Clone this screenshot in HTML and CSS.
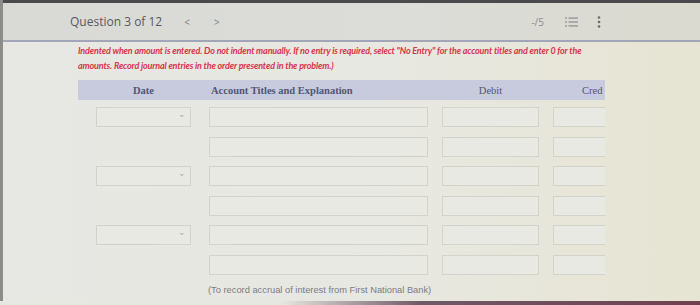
FILE: index.html
```html
<!DOCTYPE html>
<html lang="en">
<head>
  <meta charset="UTF-8">
  <title>Question 3 of 12</title>
  <link rel="stylesheet" href="styles.css">
</head>
<body>
  <div class="topbar"></div>
  <div class="header">
    <div class="nav">
      <span class="title">Question 3 of 12</span>
      <span class="arrow">&lt;</span>
      <span class="arrow">&gt;</span>
    </div>
    <div class="tools">
      <span class="score">-/5</span>
      <svg class="list-icon" width="13" height="10" viewBox="0 0 13 10">
        <g fill="#8a8d94">
          <rect x="0" y="0.5" width="2" height="1.2"/>
          <rect x="0" y="4.4" width="2" height="1.2"/>
          <rect x="0" y="8.3" width="2" height="1.2"/>
          <rect x="3.5" y="0.5" width="9.5" height="1.2"/>
          <rect x="3.5" y="4.4" width="9.5" height="1.2"/>
          <rect x="3.5" y="8.3" width="9.5" height="1.2"/>
        </g>
      </svg>
      <svg class="kebab" width="4" height="12" viewBox="0 0 4 12">
        <g fill="#666a72">
          <circle cx="2" cy="1.5" r="1.3"/>
          <circle cx="2" cy="6" r="1.3"/>
          <circle cx="2" cy="10.5" r="1.3"/>
        </g>
      </svg>
    </div>
  </div>

  <div class="content">
    <p class="note">Indented when amount is entered. Do not indent manually. If no entry is required, select "No Entry" for the account titles and enter 0 for the amounts. Record journal entries in the order presented in the problem.)</p>

    <div class="journal">
      <div class="journal-head">
        <span class="col-date">Date</span>
        <span class="col-account">Account Titles and Explanation</span>
        <span class="col-debit">Debit</span>
        <span class="col-credit">Cred</span>
      </div>
      <div class="journal-body">
        <div class="select">&#8964;</div>
        <div class="box account"></div>
        <div class="box"></div>
        <div class="box"></div>

        <div class="empty"></div>
        <div class="box account"></div>
        <div class="box"></div>
        <div class="box"></div>

        <div class="select">&#8964;</div>
        <div class="box account"></div>
        <div class="box"></div>
        <div class="box"></div>

        <div class="empty"></div>
        <div class="box account"></div>
        <div class="box"></div>
        <div class="box"></div>

        <div class="select">&#8964;</div>
        <div class="box account"></div>
        <div class="box"></div>
        <div class="box"></div>

        <div class="empty"></div>
        <div class="box account"></div>
        <div class="box"></div>
        <div class="box"></div>
      </div>
      <p class="explain">(To record accrual of interest from First National Bank)</p>
    </div>
  </div>
  <div class="bottom-edge"></div>
</body>
</html>
```

FILE: styles.css
```css
body {
  margin: 0;
  width: 700px;
  height: 305px;
  overflow: hidden;
  font-family: "Open Sans", "Liberation Sans", sans-serif;
  background: linear-gradient(90deg, #e7e7e3 0%, #e8e8e2 55%, #e6e4d2 100%);
  border-left: 3px solid #8c8c88;
  box-sizing: border-box;
}
.topbar {
  height: 3px;
  background: #4a4a4c;
}
.header {
  height: 37px;
  display: flex;
  align-items: center;
  justify-content: space-between;
  background: linear-gradient(90deg, #d9d9d5 0%, #dcdcd8 60%, #dadad0 100%);
  border-bottom: 2px solid #a2a6b8;
  padding: 0 99px 0 67px;
}
.nav {
  display: flex;
  align-items: center;
}
.title {
  font-size: 12px;
  color: #585a5e;
}
.arrow {
  font-size: 10px;
  color: #7c7e84;
  margin-left: 22px;
}
.arrow + .arrow {
  margin-left: 24px;
}
.tools {
  display: flex;
  align-items: center;
}
.score {
  font-size: 10px;
  color: #8a8c92;
}
.list-icon {
  margin-left: 21px;
}
.kebab {
  margin-left: 19px;
}
.content {
  padding: 1px 0 0 75px;
}
.note {
  margin: 0;
  width: 515px;
  font-family: Lato, "Liberation Sans", sans-serif;
  font-size: 9px;
  font-weight: bold;
  font-style: italic;
  line-height: 15px;
  color: #d8344a;
  letter-spacing: -0.15px;
}
.journal {
  margin-top: 7px;
  width: 527px;
  overflow: hidden;
}
.journal-head {
  height: 20px;
  background: #c8cadd;
  display: grid;
  grid-template-columns: 18px 95px 18px 219px 14px 97px 14px 1fr;
  align-items: center;
  font-family: "Liberation Serif", serif;
  font-size: 10.5px;
  font-weight: bold;
  color: #525673;
  white-space: nowrap;
}
.col-date {
  grid-column: 2;
  text-align: center;
}
.col-account {
  grid-column: 4;
  padding-left: 2px;
}
.col-debit {
  grid-column: 6;
  text-align: center;
  font-weight: normal;
}
.col-credit {
  grid-column: 8;
  font-weight: normal;
  padding-left: 29px;
}
.journal-body {
  display: grid;
  grid-template-columns: 95px 223px 97px 97px;
  grid-auto-rows: 20px;
  column-gap: 14px;
  row-gap: 9.5px;
  margin: 7px 0 0 18px;
  width: 560px;
}
.box,
.select {
  border: 1px solid #d2d3cb;
  background: #e9e9e4;
  box-sizing: border-box;
}
.select {
  text-align: right;
  padding-right: 4px;
  font-size: 9px;
  line-height: 12px;
  color: #a8a8a4;
}
.account {
  margin-left: 4px;
}
.explain {
  margin: 10px 0 0 130px;
  font-family: "Liberation Sans", sans-serif;
  font-size: 9.3px;
  color: #7a7c80;
  white-space: nowrap;
}
.bottom-edge {
  position: absolute;
  left: 0;
  right: 0;
  top: 301px;
  height: 4px;
  background: linear-gradient(90deg, #e8e8e2 0%, #e8e8e2 40%, #6e5a66 60%, #70404f 100%);
}
```
